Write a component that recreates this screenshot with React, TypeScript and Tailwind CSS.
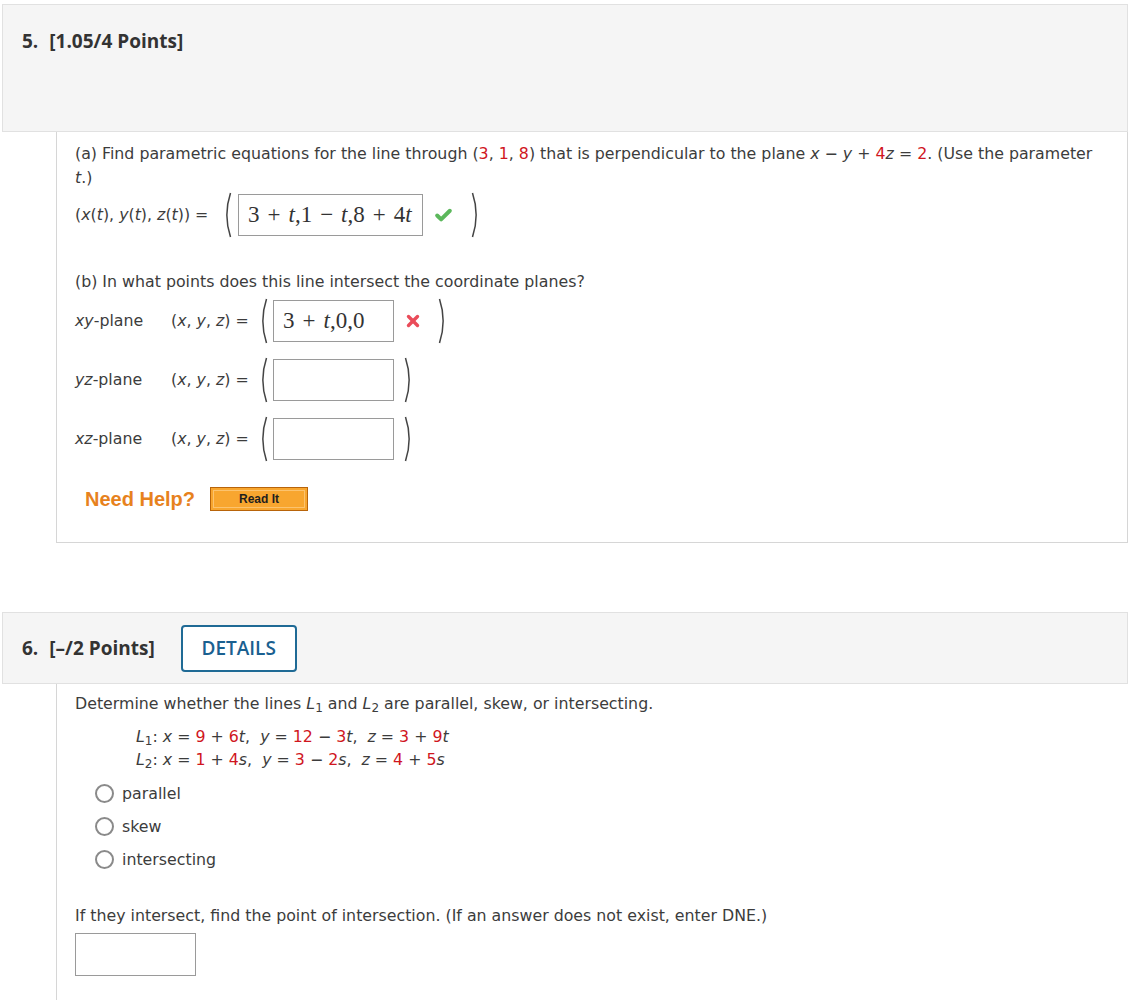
import { Check, X } from "lucide-react";

const body = "font-[family-name:'DejaVu_Sans',Verdana,sans-serif] text-[15.8px] text-[#3c3c3c]";
const red = "text-[#d0161e]";

function Paren({ side }: { side: "(" | ")" }) {
  return (
    <svg width="10" height="46" viewBox="0 0 10 46" className="shrink-0">
      <path
        d={side === "(" ? "M8.5 1 Q1.2 23 8.5 45" : "M1.5 1 Q8.8 23 1.5 45"}
        fill="none"
        stroke="#444"
        strokeWidth="1.5"
      />
    </svg>
  );
}

function Op({ children }: { children: string }) {
  return <span className="px-[8px]">{children}</span>;
}

function MathBox({ w, children }: { w: string; children?: React.ReactNode }) {
  return (
    <div
      className={`${w} h-[42px] border border-[#9a9a9a] bg-white flex items-center px-[9px] font-[family-name:'Liberation_Serif',serif] text-[23px] text-[#333] whitespace-nowrap`}
    >
      {children}
    </div>
  );
}

function PlaneRow({ label, children, mark }: { label: React.ReactNode; children?: React.ReactNode; mark?: React.ReactNode }) {
  return (
    <div className="flex items-center h-[42px]">
      <span className="w-[96px]">{label}</span>
      <span className="w-[87px]">
        (<i>x</i>, <i>y</i>, <i>z</i>) =
      </span>
      <Paren side="(" />
      <div className="ml-[5px]">
        <MathBox w="w-[121px]">{children}</MathBox>
      </div>
      {mark}
      <span className={mark ? "ml-[16px]" : "ml-[10px]"}>
        <Paren side=")" />
      </span>
    </div>
  );
}

function Radio({ label }: { label: string }) {
  return (
    <label className="flex items-center gap-[8px] h-[33px]">
      <span className="w-[19px] h-[19px] rounded-full border-2 border-[#8a8a8a] bg-white" />
      <span>{label}</span>
    </label>
  );
}

export default function App() {
  return (
    <div className="min-h-[1000px] bg-white pt-[4px] pl-[2px] pr-[1px]">
      {/* question 5 */}
      <div className="h-[128px] bg-[#f5f5f5] border border-[#e1e1e1] pl-[19px] pt-[22px]">
        <h3 className="font-[family-name:'Open_Sans',sans-serif] font-bold text-[19px] text-[#333] flex gap-[11px]">
          <span>5.</span>
          <span>[1.05/4 Points]</span>
        </h3>
      </div>
      <div className={`ml-[54px] border-l border-r border-b border-[#d6d6d6] pl-[18px] pr-[20px] pt-[10px] pb-[28px] ${body}`}>
        <p className="leading-[24px]">
          (a) Find parametric equations for the line through (<span className={red}>3</span>,{" "}
          <span className={red}>1</span>, <span className={red}>8</span>) that is perpendicular to the plane{" "}
          <i>x</i> − <i>y</i> + <span className={red}>4</span>
          <i>z</i> = <span className={red}>2</span>. (Use the parameter <i>t</i>.)
        </p>
        <div className="flex items-center h-[42px] mt-[4px]">
          <span className="w-[147px] whitespace-nowrap">
            (<i>x</i>(<i>t</i>), <i>y</i>(<i>t</i>), <i>z</i>(<i>t</i>)) =
          </span>
          <Paren side="(" />
          <div className="ml-[6px]">
            <MathBox w="w-[185px]">
              3<Op>+</Op>
              <i>t</i>,1<Op>−</Op>
              <i>t</i>,8<Op>+</Op>4<i>t</i>
            </MathBox>
          </div>
          <Check className="ml-[11px] w-[19px] h-[19px] text-[#5cb85c]" strokeWidth={5} />
          <span className="ml-[18px]">
            <Paren side=")" />
          </span>
        </div>

        <p className="leading-[24px] mt-[34px]">(b) In what points does this line intersect the coordinate planes?</p>
        <div className="mt-[6px] flex flex-col gap-[17px]">
          <PlaneRow
            label={
              <>
                <i>xy</i>-plane
              </>
            }
            mark={<X className="ml-[10px] w-[18px] h-[18px] text-[#ea4c5a]" strokeWidth={4.5} />}
          >
            3<Op>+</Op>
            <i>t</i>,0,0
          </PlaneRow>
          <PlaneRow
            label={
              <>
                <i>yz</i>-plane
              </>
            }
          />
          <PlaneRow
            label={
              <>
                <i>xz</i>-plane
              </>
            }
          />
        </div>

        <div className="flex items-center mt-[24px] ml-[10px] gap-[15px]">
          <span className="font-[family-name:'Liberation_Sans',Arial,sans-serif] font-bold text-[20px] text-[#e7821d]">Need Help?</span>
          <button className="w-[98px] h-[24px] border border-[#b8640a] bg-[#f8a62f] p-[2px]">
            <span className="block h-full border border-[#fcc36e] font-[family-name:'Liberation_Sans',Arial,sans-serif] font-bold text-[12px] leading-[16px] text-[#1e1e1e]">
              Read It
            </span>
          </button>
        </div>
      </div>

      {/* question 6 */}
      <div className="mt-[69px] h-[72px] bg-[#f5f5f5] border border-[#e1e1e1] pl-[19px] flex items-center">
        <h3 className="font-[family-name:'Open_Sans',sans-serif] font-bold text-[19px] text-[#333] flex gap-[11px]">
          <span>6.</span>
          <span>[–/2 Points]</span>
        </h3>
        <button className="ml-[26px] w-[116px] h-[47px] border-2 border-[#1f6a95] rounded-[4px] font-[family-name:'Open_Sans',sans-serif] font-semibold text-[19px] text-[#1a6090] bg-white">
          DETAILS
        </button>
      </div>
      <div className={`ml-[54px] border-l border-[#d6d6d6] pl-[18px] pr-[20px] pt-[8px] pb-[30px] ${body}`}>
        <p className="leading-[24px]">
          Determine whether the lines <i>L</i>
          <sub className="text-[12px]">1</sub> and <i>L</i>
          <sub className="text-[12px]">2</sub> are parallel, skew, or intersecting.
        </p>
        <div className="ml-[61px] mt-[9px] leading-[23px]">
          <div>
            <i>L</i>
            <sub className="text-[12px]">1</sub>: <i>x</i> = <span className={red}>9</span> + <span className={red}>6</span>
            <i>t</i>,&nbsp; <i>y</i> = <span className={red}>12</span> − <span className={red}>3</span>
            <i>t</i>,&nbsp; <i>z</i> = <span className={red}>3</span> + <span className={red}>9</span>
            <i>t</i>
          </div>
          <div>
            <i>L</i>
            <sub className="text-[12px]">2</sub>: <i>x</i> = <span className={red}>1</span> + <span className={red}>4</span>
            <i>s</i>,&nbsp; <i>y</i> = <span className={red}>3</span> − <span className={red}>2</span>
            <i>s</i>,&nbsp; <i>z</i> = <span className={red}>4</span> + <span className={red}>5</span>
            <i>s</i>
          </div>
        </div>
        <div className="ml-[20px] mt-[6px] flex flex-col">
          <Radio label="parallel" />
          <Radio label="skew" />
          <Radio label="intersecting" />
        </div>
        <p className="leading-[24px] mt-[28px]">
          If they intersect, find the point of intersection. (If an answer does not exist, enter DNE.)
        </p>
        <div className="mt-[5px] w-[121px] h-[43px] border border-[#9a9a9a] bg-white" />
      </div>
    </div>
  );
}
